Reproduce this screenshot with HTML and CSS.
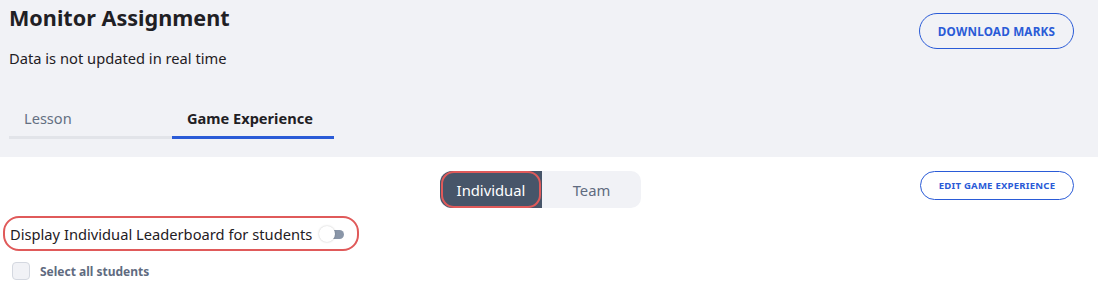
FILE: index.html
```html
<!DOCTYPE html>
<html>
<head>
<meta charset="utf-8">
<link rel="stylesheet" href="styles.css">
</head>
<body>
<header class="header">
  <div class="head-row">
    <div class="head-text">
      <h1 class="title">Monitor Assignment</h1>
      <p class="subtitle">Data is not updated in real time</p>
    </div>
    <button class="btn-outline btn-download">DOWNLOAD MARKS</button>
  </div>
  <nav class="tabs">
    <div class="tab">Lesson</div>
    <div class="tab tab-active">Game Experience</div>
  </nav>
</header>
<main class="content">
  <div class="toolbar">
    <div class="seg">
      <button class="seg-btn seg-active">Individual</button>
      <button class="seg-btn">Team</button>
    </div>
    <button class="btn-outline btn-edit">EDIT GAME EXPERIENCE</button>
  </div>
  <div class="leader-row">
    <span class="leader-label">Display Individual Leaderboard for students</span>
    <span class="toggle"><span class="toggle-track"></span><span class="toggle-knob"></span></span>
  </div>
  <label class="select-all">
    <span class="checkbox"></span>
    <span class="select-label">Select all students</span>
  </label>
</main>
</body>
</html>
```

FILE: styles.css
```css
* { box-sizing: border-box; }
body {
  margin: 0;
  font-family: "Noto Sans", "Open Sans", sans-serif;
  color: #1f2024;
  background: #fff;
}
.header {
  background: #f1f2f6;
  height: 157px;
  padding: 0 24px 0 9px;
}
.head-row {
  display: flex;
  justify-content: space-between;
  align-items: flex-start;
}
.title {
  margin: 0;
  padding-top: 3px;
  font-size: 21.6px;
  font-weight: 700;
  line-height: 30px;
  color: #1f2024;
}
.subtitle {
  margin: 15px 0 0;
  font-size: 14.7px;
  line-height: 20px;
  color: #1f2024;
}
.btn-outline {
  font-family: inherit;
  background: transparent;
  border: 1.5px solid #2a5bd7;
  color: #2a5bd7;
  border-radius: 999px;
  font-weight: 700;
  cursor: pointer;
  letter-spacing: 0.2px;
}
.btn-download {
  margin-top: 13px;
  width: 155px;
  height: 36px;
  font-size: 11.7px;
}
.tabs {
  display: flex;
  margin-top: 40px;
}
.tab {
  width: 163px;
  height: 31px;
  padding-left: 15px;
  font-size: 14.6px;
  line-height: 20px;
  color: #646f82;
  border-bottom: 3px solid #e2e4e9;
}
.tab-active {
  padding-left: 15px;
  width: 162px;
  color: #1f2024;
  font-weight: 700;
  border-bottom-color: #2a5bd7;
}
.content {
  padding: 14px 24px 0 3px;
}
.toolbar {
  display: flex;
  justify-content: space-between;
  align-items: center;
  height: 37px;
}
.seg {
  display: flex;
  margin-left: 437px;
  background: #f1f2f6;
  border-radius: 10px;
  height: 37px;
  width: 201px;
}
.seg-btn {
  font-family: inherit;
  font-size: 14.8px;
  border: none;
  background: transparent;
  color: #5f6b80;
  width: 99px;
  cursor: pointer;
}
.seg-active {
  position: relative;
  width: 102px;
  background: #475569;
  color: #fff;
  border-radius: 12px 0 0 12px;
}
.seg-active::after {
  content: "";
  position: absolute;
  top: 0;
  left: 1px;
  right: 1px;
  bottom: 0;
  border: 2.5px solid #e05a5a;
  border-radius: 13px;
  pointer-events: none;
}
.btn-edit {
  width: 154px;
  height: 29px;
  font-size: 9.6px;
  margin-top: -8px;
}
.leader-row {
  display: inline-flex;
  align-items: center;
  gap: 7px;
  margin-top: 8px;
  padding: 0 12px 0 5px;
  height: 35px;
  border: 2.5px solid #e05a5a;
  border-radius: 16px;
}
.leader-label {
  font-size: 14.7px;
  color: #1f2024;
  line-height: 20px;
}
.toggle {
  position: relative;
  width: 26px;
  height: 16px;
  display: inline-block;
}
.toggle-track {
  position: absolute;
  left: 8px;
  top: 4px;
  width: 17px;
  height: 9px;
  border-radius: 5px;
  background: #8a96a8;
}
.toggle-knob {
  position: absolute;
  left: 0;
  top: 0;
  width: 16px;
  height: 16px;
  border-radius: 50%;
  background: #fff;
  box-shadow: 0 0 2px rgba(0,0,0,0.25);
}
.select-all {
  display: flex;
  align-items: center;
  gap: 10px;
  margin-top: 11px;
  padding-left: 9px;
}
.checkbox {
  width: 18px;
  height: 18px;
  border: 1px solid #d4d8e0;
  border-radius: 4px;
  background: #f1f2f6;
}
.select-label {
  font-size: 12px;
  font-weight: 700;
  color: #5f6b80;
}
```
